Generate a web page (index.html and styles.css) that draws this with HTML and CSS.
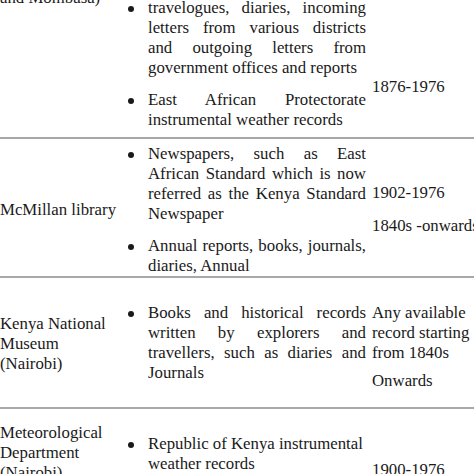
FILE: index.html
```html
<!DOCTYPE html>
<html>
<head>
<meta charset="utf-8">
<link rel="stylesheet" href="styles.css">
</head>
<body>
<div class="page">
  <div class="row r1">
    <div class="c1"><span class="ln">and Mombasa)</span></div>
    <div class="c2">
      <div class="item">
        <span class="dot"></span>
        <div class="txt">
          <span class="ln">travelogues, diaries, incoming</span>
          <span class="ln">letters from various districts</span>
          <span class="ln">and outgoing letters from</span>
          <span class="ln end">government offices and reports</span>
        </div>
      </div>
      <div class="item">
        <span class="dot"></span>
        <div class="txt">
          <span class="ln">East African Protectorate</span>
          <span class="ln end">instrumental weather records</span>
        </div>
      </div>
    </div>
    <div class="c3"><span class="ln">1876-1976</span></div>
  </div>

  <div class="row r2">
    <div class="c1"><span class="ln">McMillan library</span></div>
    <div class="c2">
      <div class="item">
        <span class="dot"></span>
        <div class="txt">
          <span class="ln">Newspapers, such as East</span>
          <span class="ln">African Standard which is now</span>
          <span class="ln">referred as the Kenya Standard</span>
          <span class="ln end">Newspaper</span>
        </div>
      </div>
      <div class="item">
        <span class="dot"></span>
        <div class="txt">
          <span class="ln">Annual reports, books, journals,</span>
          <span class="ln end">diaries, Annual</span>
        </div>
      </div>
    </div>
    <div class="c3">
      <span class="ln">1902-1976</span>
      <span class="ln gap">1840s -onwards</span>
    </div>
  </div>

  <div class="row r3">
    <div class="c1">
      <span class="ln">Kenya National</span>
      <span class="ln">Museum</span>
      <span class="ln">(Nairobi)</span>
    </div>
    <div class="c2">
      <div class="item">
        <span class="dot"></span>
        <div class="txt">
          <span class="ln">Books and historical records</span>
          <span class="ln">written by explorers and</span>
          <span class="ln">travellers, such as diaries and</span>
          <span class="ln end">Journals</span>
        </div>
      </div>
    </div>
    <div class="c3">
      <span class="ln">Any available</span>
      <span class="ln">record starting</span>
      <span class="ln">from 1840s</span>
      <span class="ln gap2">Onwards</span>
    </div>
  </div>

  <div class="row r4">
    <div class="c1">
      <span class="ln">Meteorological</span>
      <span class="ln">Department</span>
      <span class="ln">(Nairobi)</span>
    </div>
    <div class="c2">
      <div class="item">
        <span class="dot"></span>
        <div class="txt">
          <span class="ln end">Republic of Kenya instrumental</span>
          <span class="ln end">weather records</span>
        </div>
      </div>
    </div>
    <div class="c3"><span class="ln">1900-1976</span></div>
  </div>
</div>
</body>
</html>
```

FILE: styles.css
```css
html, body {
  margin: 0;
  padding: 0;
  background: #ffffff;
}

.page {
  width: 474px;
  height: 474px;
  overflow: hidden;
  font-family: "Liberation Serif", "Times New Roman", serif;
  font-size: 16.8px;
  line-height: 20px;
  color: #1a1a1a;
}

.row {
  display: grid;
  grid-template-columns: 120px 252px 102px;
  box-sizing: border-box;
  border-bottom: 2px solid #a8a8a8;
}

.ln {
  display: block;
  white-space: nowrap;
}

.c2 .ln {
  text-align: justify;
  text-align-last: justify;
}

.c2 .ln.end {
  text-align-last: left;
}

.item {
  display: flex;
  padding-right: 6px;
}

.item + .item {
  margin-top: 12px;
}

.dot {
  flex: 0 0 28px;
  position: relative;
}

.dot::before {
  content: "";
  position: absolute;
  left: 8px;
  top: 8px;
  width: 6px;
  height: 6px;
  border-radius: 50%;
  background: #1a1a1a;
}

.txt {
  flex: 1;
  min-width: 0;
}

.r1 {
  margin-top: -22px;
  height: 161px;
}
.r1 .c1 { padding-top: 10px; }
.r1 .c2 { padding-top: 20px; }
.r1 .c3 { padding-top: 99px; }

.r2 { height: 139px; }
.r2 .c1 { padding-top: 61px; }
.r2 .c2 { padding-top: 5px; }
.r2 .c3 { padding-top: 44px; }

.r3 { height: 131px; }
.r3 .c1 { padding-top: 36px; }
.r3 .c2 { padding-top: 25px; }
.r3 .c3 { padding-top: 25px; }

.r4 { height: 120px; border-bottom: none; }
.r4 .c1 { padding-top: 14px; }
.r4 .c2 { padding-top: 25px; }
.r4 .c3 { padding-top: 51px; }

.gap { margin-top: 13px; }
.gap2 { margin-top: 8px; }
```
